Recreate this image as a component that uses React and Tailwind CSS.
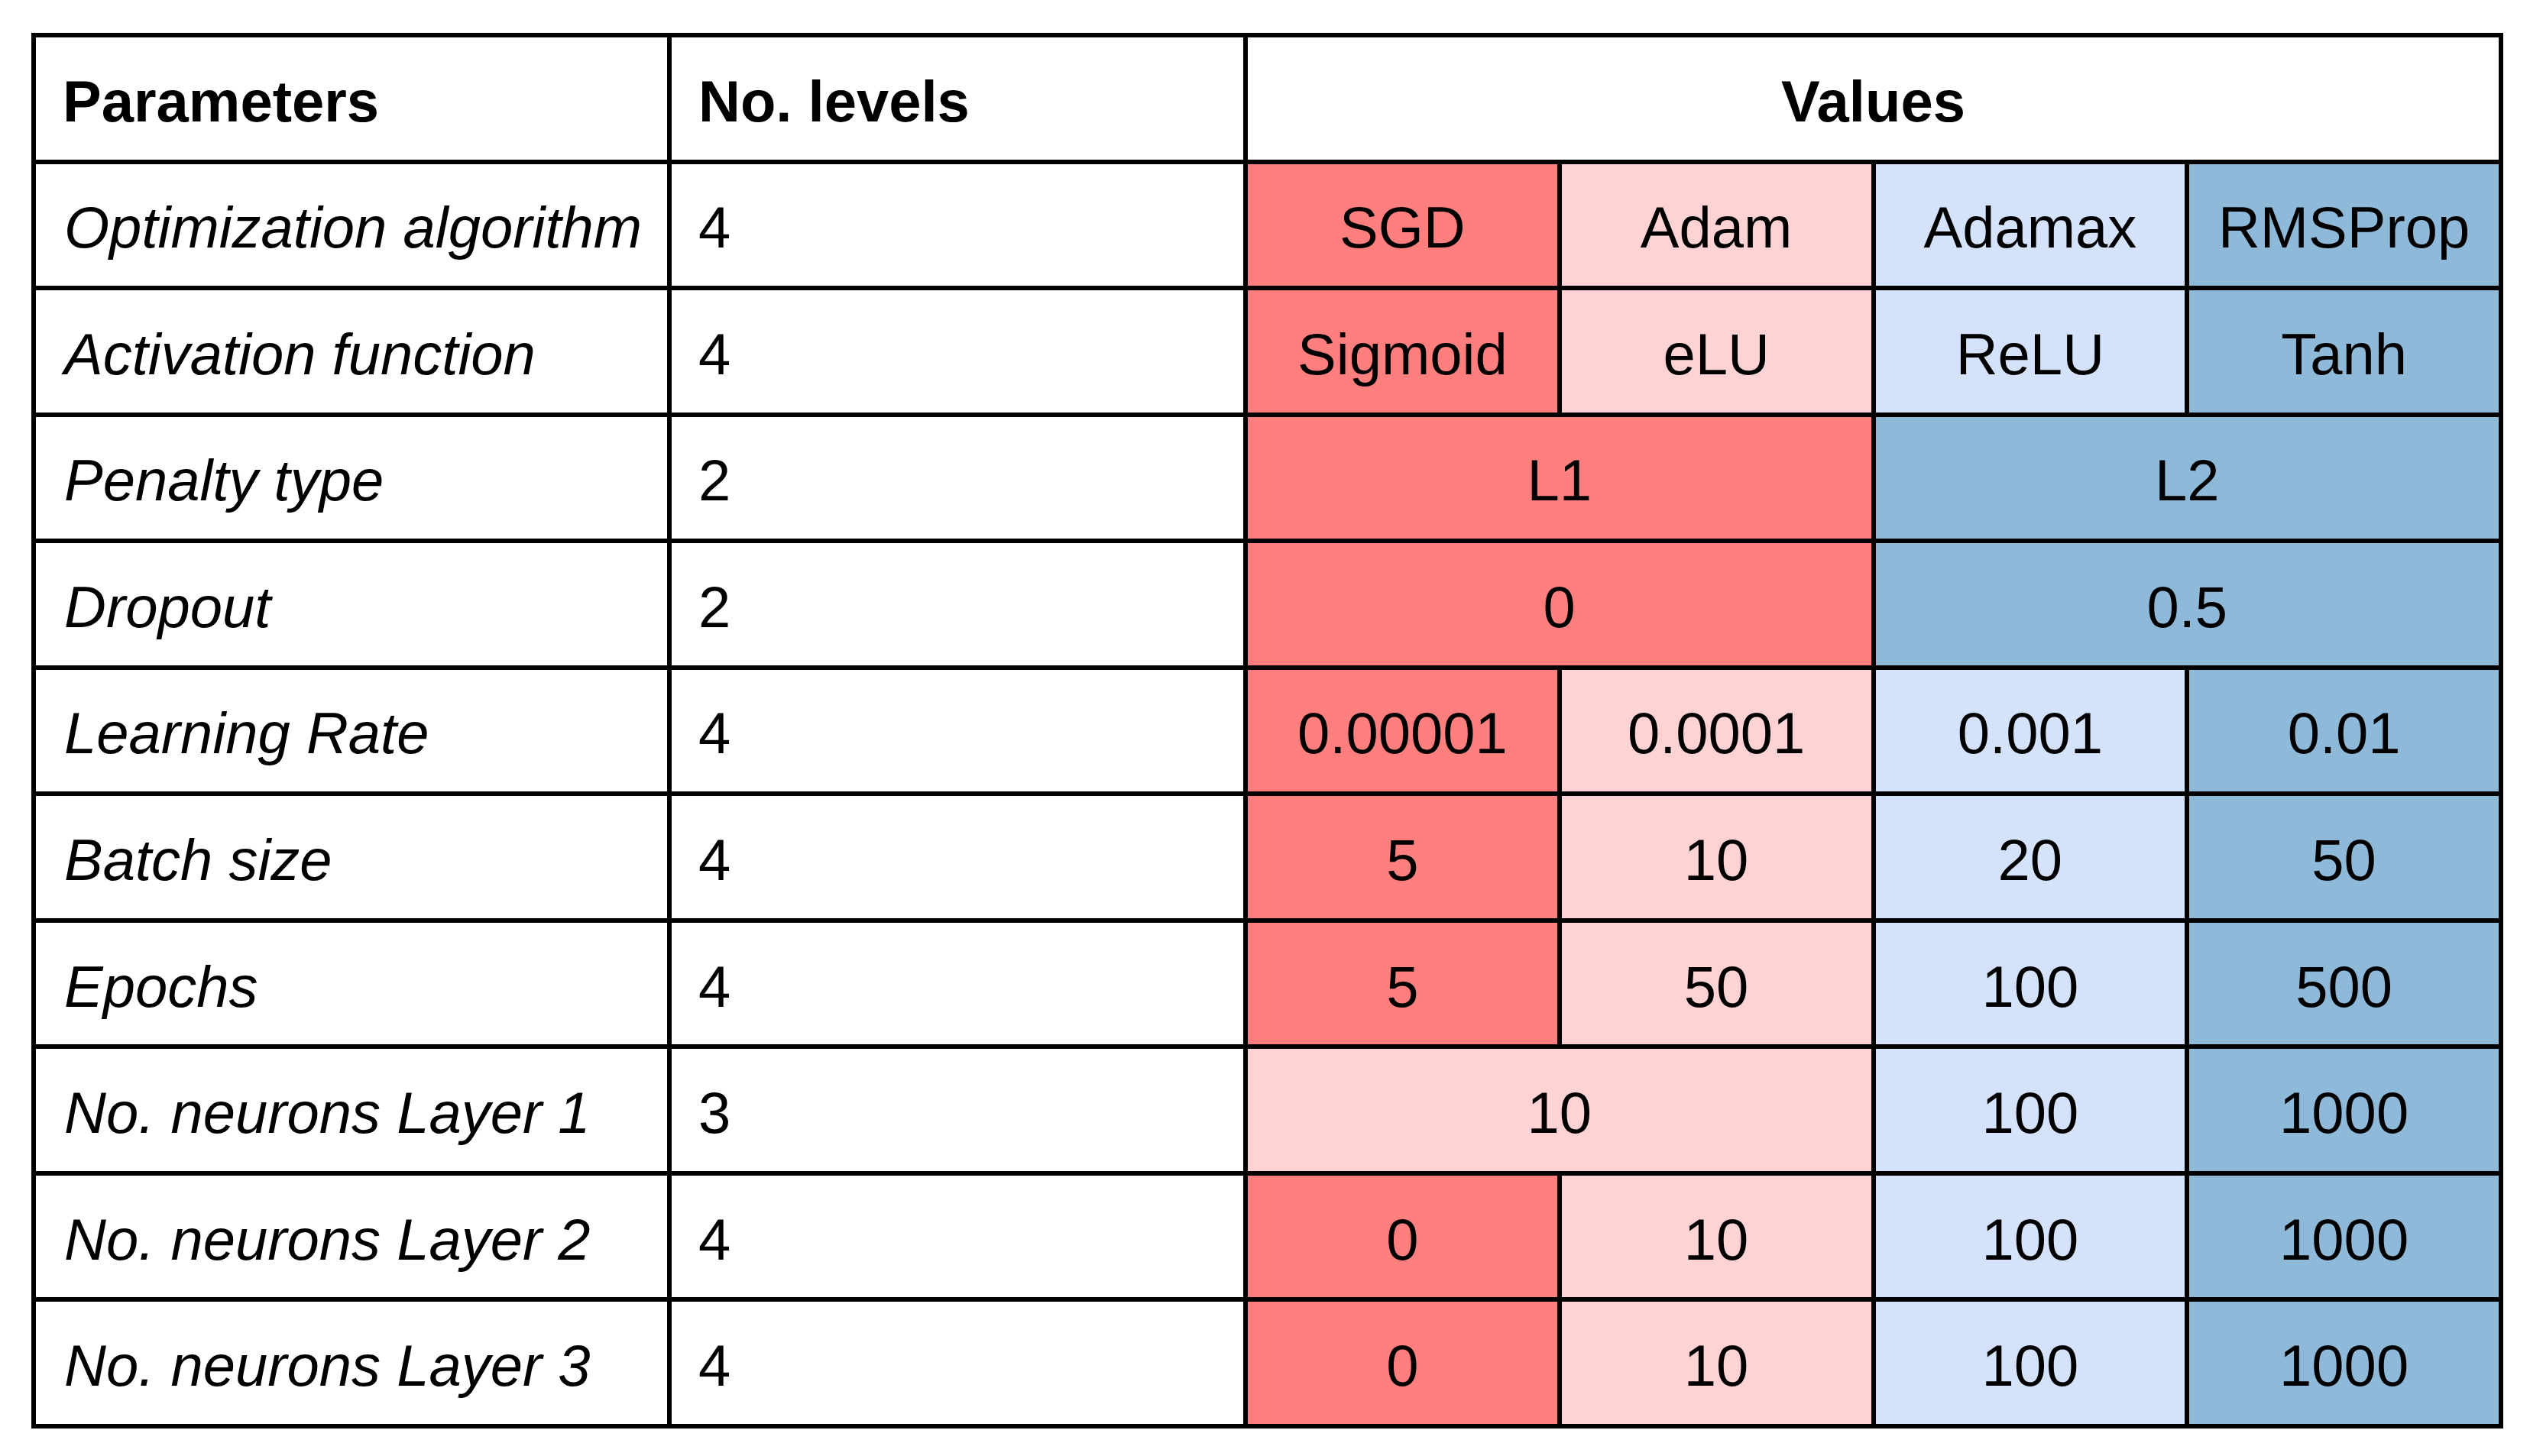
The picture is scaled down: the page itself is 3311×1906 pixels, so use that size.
import React from 'react';

const RED = 'bg-[#ff7f7f]';
const PINK = 'bg-[#ffd3d3]';
const SKY = 'bg-[#d4e3fb]';
const STEEL = 'bg-[#8eb9d9]';

const rows = [
    { name: 'Optimization algorithm', levels: 4, values: [['SGD', RED], ['Adam', PINK], ['Adamax', SKY], ['RMSProp', STEEL]] },
    { name: 'Activation function', levels: 4, values: [['Sigmoid', RED], ['eLU', PINK], ['ReLU', SKY], ['Tanh', STEEL]] },
    { name: 'Penalty type', levels: 2, values: [['L1', RED, 2], ['L2', STEEL, 2]] },
    { name: 'Dropout', levels: 2, values: [['0', RED, 2], ['0.5', STEEL, 2]] },
    { name: 'Learning Rate', levels: 4, values: [['0.00001', RED], ['0.0001', PINK], ['0.001', SKY], ['0.01', STEEL]] },
    { name: 'Batch size', levels: 4, values: [['5', RED], ['10', PINK], ['20', SKY], ['50', STEEL]] },
    { name: 'Epochs', levels: 4, values: [['5', RED], ['50', PINK], ['100', SKY], ['500', STEEL]] },
    { name: 'No. neurons Layer 1', levels: 3, values: [['10', PINK, 2], ['100', SKY], ['1000', STEEL]] },
    { name: 'No. neurons Layer 2', levels: 4, values: [['0', RED], ['10', PINK], ['100', SKY], ['1000', STEEL]] },
    { name: 'No. neurons Layer 3', levels: 4, values: [['0', RED], ['10', PINK], ['100', SKY], ['1000', STEEL]] },
];

const App = () => {
    return (
        <div className="min-h-[1906px] bg-white pl-[41px] pt-[43px] text-[76px] leading-none text-black font-['Liberation_Sans',Arial,sans-serif]">
            <div className="grid w-[3235px] h-[1827px] grid-cols-[826px_748px_repeat(4,1fr)] grid-rows-[repeat(11,1fr)] gap-[6px] p-[6px] bg-black">
                <div className="bg-white flex items-center pl-[35px] pt-[8px] font-bold">Parameters</div>
                <div className="bg-white flex items-center pl-[35px] pt-[8px] font-bold">No. levels</div>
                <div className="bg-white col-span-4 flex items-center justify-center pt-[8px] font-bold">Values</div>

                {rows.map(row => (
                    <React.Fragment key={row.name}>
                        <div className="bg-white flex items-center pl-[37px] pt-[8px] italic whitespace-nowrap">{row.name}</div>
                        <div className="bg-white flex items-center pl-[35px] pt-[8px]">{row.levels}</div>
                        {row.values.map(([label, color, span], i) => (
                            <div
                                key={i}
                                className={`${color} ${span === 2 ? 'col-span-2' : ''} flex items-center justify-center pt-[8px]`}
                            >
                                {label}
                            </div>
                        ))}
                    </React.Fragment>
                ))}
            </div>
        </div>
    );
};

export default App;
